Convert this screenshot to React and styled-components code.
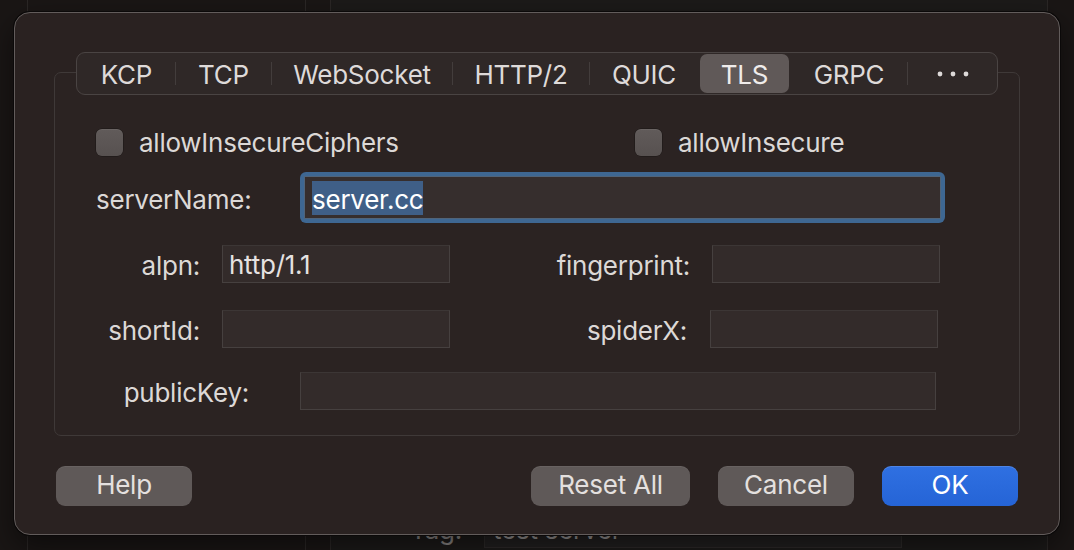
import styled, { createGlobalStyle } from "styled-components";

const GlobalStyle = createGlobalStyle`
  html, body {
    margin: 0;
    padding: 0;
    background: #1b1716;
  }
  body {
    font-family: Inter, "Noto Sans", "Liberation Sans", sans-serif;
    letter-spacing: -0.25px;
    -webkit-font-smoothing: antialiased;
  }
  * {
    box-sizing: border-box;
  }
`;

const Screen = styled.div`
  position: relative;
  width: 1074px;
  height: 550px;
  overflow: hidden;
`;

/* window behind the sheet */
const Window = styled.div`
  display: grid;
  grid-template-columns: 27px 278px 25px 1fr 27px;
  height: 100%;
`;

const Pane = styled.div`
  background: ${(p) => p.$bg || "#1a1615"};
  border-left: ${(p) => (p.$line ? "1px solid #2b2726" : "none")};
`;

const MainPane = styled(Pane)`
  display: flex;
  flex-direction: column;
  justify-content: flex-end;
  padding-bottom: 2px;
`;

const BackRow = styled.div`
  display: flex;
  align-items: center;
  height: 38px;
`;

const BackLabel = styled.span`
  width: 131px;
  text-align: right;
  font-size: 26px;
  color: #8a8685;
`;

const BackField = styled.div`
  display: flex;
  align-items: center;
  margin-left: 22px;
  width: 418px;
  height: 38px;
  padding-left: 8px;
  background: #222020;
  border: 1px solid #2d2a29;
  font-size: 26px;
  color: #9a9695;
`;

/* sheet */
const Sheet = styled.div`
  position: absolute;
  top: 12px;
  left: 14px;
  width: 1046px;
  height: 523px;
  display: flex;
  flex-direction: column;
  padding: 39px 39px 28px;
  background: #2a2221;
  border: 1px solid #625c5b;
  border-radius: 16px;
  box-shadow: 0 0 0 1px #0b0909, 0 12px 30px rgba(0, 0, 0, 0.5);
  color: #dcd8d6;
`;

const Segmented = styled.div`
  position: relative;
  z-index: 1;
  display: flex;
  height: 43px;
  margin: 0 22px;
  background: #2f2827;
  border: 1px solid #4a4443;
  border-radius: 9px;
`;

const Tab = styled.div`
  position: relative;
  display: flex;
  width: ${(p) => p.$w}px;
  padding: 1px 1px 1px 2px;

  &::before {
    content: "";
    display: ${(p) => (p.$sep ? "block" : "none")};
    position: absolute;
    left: 0;
    top: 9px;
    width: 1px;
    height: 23px;
    background: #433d3c;
  }
`;

const TabLabel = styled.span`
  flex: 1;
  display: flex;
  align-items: center;
  justify-content: center;
  padding-top: 1px;
  border-radius: 7px;
  background: ${(p) => (p.$active ? "#605958" : "transparent")};
  font-size: 26px;
  color: ${(p) => (p.$active ? "#efeceb" : "#dedad9")};
`;

const GroupBox = styled.div`
  display: flex;
  flex-direction: column;
  height: 364px;
  margin-top: -23px;
  padding: 56px 0 0 41px;
  background: #2b2322;
  border: 1px solid #3f3938;
  border-radius: 7px;
`;

const Row = styled.div`
  display: flex;
  align-items: center;
  height: ${(p) => p.$h}px;
  margin-top: ${(p) => p.$mt || 0}px;
`;

const CheckItem = styled.label`
  display: flex;
  align-items: center;
  width: ${(p) => p.$w || "auto"};
  font-size: 26px;
`;

const Box = styled.span`
  width: 27px;
  height: 27px;
  margin-right: 16px;
  border-radius: 6px;
  background: linear-gradient(#615b5a, #575150);
  box-shadow: inset 0 1px 0 rgba(255, 255, 255, 0.06), 0 0 0 0.5px rgba(0, 0, 0, 0.4);
`;

const Label = styled.span`
  width: ${(p) => p.$w}px;
  padding-top: 3px;
  text-align: right;
  font-size: 26px;
  white-space: nowrap;
`;

const Field = styled.div`
  display: flex;
  align-items: center;
  width: ${(p) => p.$w}px;
  height: 38px;
  margin-left: ${(p) => p.$gap}px;
  padding-left: 6px;
  background: #332b2a;
  border: 1px solid #46403f;
  border-top-color: #3c3635;
  font-size: 26px;
  color: #e6e2e1;
`;

const FocusRing = styled.div`
  display: flex;
  width: 645px;
  height: 51px;
  margin-left: 49px;
  padding: 4px;
  background: #3e6792;
  border-radius: 6px;
`;

const FocusInput = styled.div`
  flex: 1;
  display: flex;
  align-items: center;
  padding-left: 7px;
  background: #362e2d;
  border: 1px solid #50647a;
  font-size: 26px;
`;

const Selection = styled.span`
  display: flex;
  align-items: center;
  height: 34px;
  padding-top: 3px;
  background: #3f5f87;
  color: #ffffff;
`;

const ButtonRow = styled.div`
  display: flex;
  gap: 28px;
  margin-top: 30px;
  padding: 0 2px;
`;

const Spacer = styled.div`
  flex: 1;
`;

const Button = styled.button`
  width: ${(p) => p.$w || 136}px;
  height: 40px;
  padding: 0 0 3px;
  border: none;
  border-radius: 9px;
  background: ${(p) =>
    p.$primary ? "linear-gradient(#2f70e2, #2564d6)" : "#5f5958"};
  box-shadow: inset 0 1px 0 rgba(255, 255, 255, ${(p) => (p.$primary ? 0.15 : 0.06)});
  font-family: inherit;
  font-size: 26px;
  letter-spacing: inherit;
  color: ${(p) => (p.$primary ? "#ffffff" : "#e4e0df")};
`;

const tabs = [
  { label: "KCP", w: 98 },
  { label: "TCP", w: 96 },
  { label: "WebSocket", w: 181 },
  { label: "HTTP/2", w: 137 },
  { label: "QUIC", w: 109 },
  { label: "TLS", w: 92 },
  { label: "GRPC", w: 117 },
  { label: "more", w: 90 },
];

const activeTab = "TLS";

const Dots = () => (
  <svg width="34" height="6" viewBox="0 0 34 6">
    <circle cx="4" cy="3" r="2.4" fill="#dedad9" />
    <circle cx="17" cy="3" r="2.4" fill="#dedad9" />
    <circle cx="30" cy="3" r="2.4" fill="#dedad9" />
  </svg>
);

export default function App() {
  const activeIndex = tabs.findIndex((t) => t.label === activeTab);

  return (
    <>
      <GlobalStyle />
      <Screen>
        <Window>
          <Pane />
          <Pane $line />
          <Pane $line />
          <MainPane $line $bg="#1c1a19">
            <BackRow>
              <BackLabel>Tag:</BackLabel>
              <BackField>test server</BackField>
            </BackRow>
          </MainPane>
          <Pane $line />
        </Window>

        <Sheet>
          <Segmented>
            {tabs.map((t, i) => {
              const sep = i > 0 && i !== activeIndex && i - 1 !== activeIndex;
              return (
                <Tab key={t.label} $w={t.w} $sep={sep}>
                  <TabLabel $active={i === activeIndex}>
                    {t.label === "more" ? <Dots /> : t.label}
                  </TabLabel>
                </Tab>
              );
            })}
          </Segmented>

          <GroupBox>
            <Row $h={27}>
              <CheckItem $w="539px">
                <Box />
                allowInsecureCiphers
              </CheckItem>
              <CheckItem>
                <Box />
                allowInsecure
              </CheckItem>
            </Row>

            <Row $h={51} $mt={16}>
              <Label $w={155}>serverName:</Label>
              <FocusRing>
                <FocusInput>
                  <Selection>server.cc</Selection>
                </FocusInput>
              </FocusRing>
            </Row>

            <Row $h={38} $mt={22}>
              <Label $w={104}>alpn:</Label>
              <Field $w={228} $gap={22}>http/1.1</Field>
              <Label $w={240}>fingerprint:</Label>
              <Field $w={228} $gap={22} />
            </Row>

            <Row $h={38} $mt={27}>
              <Label $w={104}>shortId:</Label>
              <Field $w={228} $gap={22} />
              <Label $w={237}>spiderX:</Label>
              <Field $w={228} $gap={23} />
            </Row>

            <Row $h={38} $mt={24}>
              <Label $w={153}>publicKey:</Label>
              <Field $w={636} $gap={51} />
            </Row>
          </GroupBox>

          <ButtonRow>
            <Button>Help</Button>
            <Spacer />
            <Button $w={159}>Reset All</Button>
            <Button>Cancel</Button>
            <Button $primary>OK</Button>
          </ButtonRow>
        </Sheet>
      </Screen>
    </>
  );
}
